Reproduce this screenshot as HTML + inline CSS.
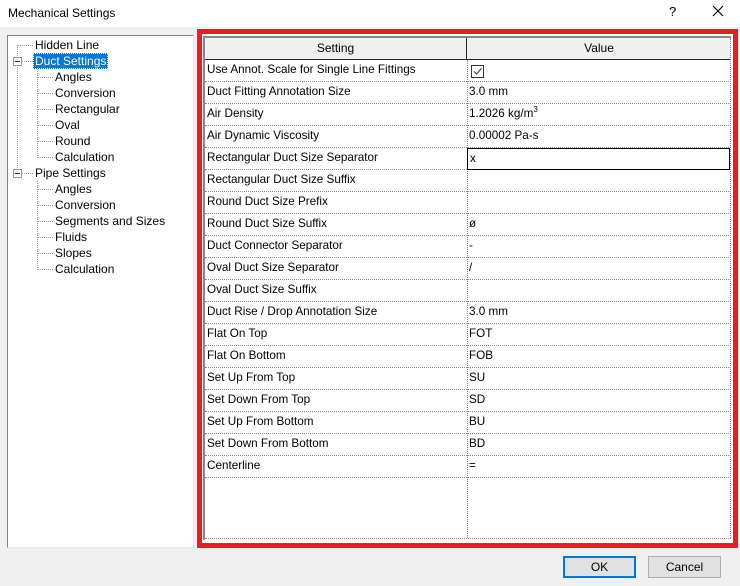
<!DOCTYPE html>
<html><head><meta charset="utf-8"><style>
*{margin:0;padding:0;box-sizing:border-box}
body{width:740px;height:586px;background:#f0f0f0;font-family:"Liberation Sans",sans-serif;font-size:12px;color:#000;position:relative;overflow:hidden}
.a{position:absolute}
.tb{left:0;top:0;width:740px;height:27px;background:#fff}
.tree{left:7px;top:35px;width:187px;height:513px;background:#fff;border:1px solid #828282;border-right-color:#e3e3e3;border-bottom-color:#e3e3e3}
.ti{position:absolute;height:16px;line-height:16px;white-space:nowrap;color:#000}
.hd{position:absolute;border-top:1px dotted #999;height:0}
.vd{position:absolute;border-left:1px dotted #999;width:0}
.red{left:197px;top:29px;width:541px;height:519px;border:5px solid #ed1c24;background:#fff}
.grid{left:203px;top:36px;width:528px;height:504px;border-top:2px solid #888;border-left:2px solid #888;background:#fff}
.hdr{position:absolute;top:0;height:22px;background:#f0f0f0;border-bottom:1px solid #222;line-height:21px;text-align:center}
.row{position:absolute;left:0;width:526px;height:22px;border-bottom:1px dotted #888;font-size:11.7px}
.c1{position:absolute;left:2px;top:0;line-height:20px;white-space:nowrap}
.c2{position:absolute;left:264px;top:0;line-height:20px;white-space:nowrap}
sup{font-size:8px;line-height:0;vertical-align:5px}
.btn{position:absolute;top:556px;width:73px;height:22px;background:#e1e1e1;border:1px solid #adadad;text-align:center;line-height:21px}
</style></head><body>
<div class="a tb"></div>
<div class="a" style="left:8px;top:6px;font-size:12px">Mechanical Settings</div>
<div class="a" style="left:669px;top:4px;font-size:13px">?</div>
<svg class="a" style="left:712px;top:5px" width="12" height="12"><path d="M1 1L11 11M11 1L1 11" stroke="#000" stroke-width="1.1"/></svg>

<div class="a tree">
 <div class="vd" style="left:9px;top:9px;height:129px"></div>
 <div class="hd" style="left:9px;top:9px;width:16px"></div>
 <div class="hd" style="left:14px;top:25px;width:11px"></div>
 <div class="hd" style="left:14px;top:137px;width:11px"></div>
 <div class="a" style="left:5px;top:21px;width:9px;height:9px;border:1px solid #999;background:#fff"></div>
 <div class="a" style="left:7px;top:25px;width:5px;border-top:1px solid #333"></div>
 <div class="a" style="left:5px;top:133px;width:9px;height:9px;border:1px solid #999;background:#fff"></div>
 <div class="a" style="left:7px;top:137px;width:5px;border-top:1px solid #333"></div>
 <div class="vd" style="left:29px;top:33px;height:89px"></div>
 <div class="hd" style="left:29px;top:41px;width:16px"></div>
 <div class="hd" style="left:29px;top:57px;width:16px"></div>
 <div class="hd" style="left:29px;top:73px;width:16px"></div>
 <div class="hd" style="left:29px;top:89px;width:16px"></div>
 <div class="hd" style="left:29px;top:105px;width:16px"></div>
 <div class="hd" style="left:29px;top:121px;width:16px"></div>
 <div class="vd" style="left:29px;top:145px;height:89px"></div>
 <div class="hd" style="left:29px;top:153px;width:16px"></div>
 <div class="hd" style="left:29px;top:169px;width:16px"></div>
 <div class="hd" style="left:29px;top:185px;width:16px"></div>
 <div class="hd" style="left:29px;top:201px;width:16px"></div>
 <div class="hd" style="left:29px;top:217px;width:16px"></div>
 <div class="hd" style="left:29px;top:233px;width:16px"></div>
 <div class="ti" style="left:27px;top:1px">Hidden Line</div>
 <div class="ti" style="left:25px;top:17px;background:#0078d7;color:#fff;padding:0 2px;outline:1px dotted #fff;outline-offset:-1px">Duct Settings</div>
 <div class="ti" style="left:47px;top:33px">Angles</div>
 <div class="ti" style="left:47px;top:49px">Conversion</div>
 <div class="ti" style="left:47px;top:65px">Rectangular</div>
 <div class="ti" style="left:47px;top:81px">Oval</div>
 <div class="ti" style="left:47px;top:97px">Round</div>
 <div class="ti" style="left:47px;top:113px">Calculation</div>
 <div class="ti" style="left:27px;top:129px">Pipe Settings</div>
 <div class="ti" style="left:47px;top:145px">Angles</div>
 <div class="ti" style="left:47px;top:161px">Conversion</div>
 <div class="ti" style="left:47px;top:177px">Segments and Sizes</div>
 <div class="ti" style="left:47px;top:193px">Fluids</div>
 <div class="ti" style="left:47px;top:209px">Slopes</div>
 <div class="ti" style="left:47px;top:225px">Calculation</div>
</div>

<div class="a red"></div>
<div class="a grid">
 <div class="hdr" style="left:0;width:262px;border-right:1px solid #222">Setting</div>
 <div class="hdr" style="left:262px;width:264px">Value</div>
 <div class="vd" style="left:262px;top:22px;height:478px;border-left-color:#888"></div>
 <div class="row" style="top:22px"><div class="c1">Use Annot. Scale for Single Line Fittings</div><div class="c2" style="left:266px;top:5px;width:13px;height:13px;border:1px solid #333;background:#fff"><svg width="11" height="11" style="position:absolute;left:0;top:0"><path d="M2 5.5L4.5 8L9.5 2.5" stroke="#333" fill="none" stroke-width="1"/></svg></div></div>
 <div class="row" style="top:44px"><div class="c1">Duct Fitting Annotation Size</div><div class="c2">3.0 mm</div></div>
 <div class="row" style="top:66px"><div class="c1">Air Density</div><div class="c2">1.2026 kg/m<sup>3</sup></div></div>
 <div class="row" style="top:88px"><div class="c1">Air Dynamic Viscosity</div><div class="c2">0.00002 Pa-s</div></div>
 <div class="row" style="top:110px"><div class="c1">Rectangular Duct Size Separator</div><div class="a" style="left:262px;top:0;width:263px;height:22px;border:1px solid #000;background:#fff;padding-left:2px;line-height:20px">x</div></div>
 <div class="row" style="top:132px"><div class="c1">Rectangular Duct Size Suffix</div></div>
 <div class="row" style="top:154px"><div class="c1">Round Duct Size Prefix</div></div>
 <div class="row" style="top:176px"><div class="c1">Round Duct Size Suffix</div><div class="c2">ø</div></div>
 <div class="row" style="top:198px"><div class="c1">Duct Connector Separator</div><div class="c2">-</div></div>
 <div class="row" style="top:220px"><div class="c1">Oval Duct Size Separator</div><div class="c2">/</div></div>
 <div class="row" style="top:242px"><div class="c1">Oval Duct Size Suffix</div></div>
 <div class="row" style="top:264px"><div class="c1">Duct Rise / Drop Annotation Size</div><div class="c2">3.0 mm</div></div>
 <div class="row" style="top:286px"><div class="c1">Flat On Top</div><div class="c2">FOT</div></div>
 <div class="row" style="top:308px"><div class="c1">Flat On Bottom</div><div class="c2">FOB</div></div>
 <div class="row" style="top:330px"><div class="c1">Set Up From Top</div><div class="c2">SU</div></div>
 <div class="row" style="top:352px"><div class="c1">Set Down From Top</div><div class="c2">SD</div></div>
 <div class="row" style="top:374px"><div class="c1">Set Up From Bottom</div><div class="c2">BU</div></div>
 <div class="row" style="top:396px"><div class="c1">Set Down From Bottom</div><div class="c2">BD</div></div>
 <div class="row" style="top:418px"><div class="c1">Centerline</div><div class="c2">=</div></div>
 <div class="hd" style="left:0;top:500px;width:526px;border-top-color:#888"></div>
 <div class="vd" style="left:525px;top:0;height:500px;border-left-color:#888"></div>
</div>

<div class="btn" style="left:563px;border:2px solid #0078d7;line-height:19px">OK</div>
<div class="btn" style="left:648px">Cancel</div>
</body></html>
